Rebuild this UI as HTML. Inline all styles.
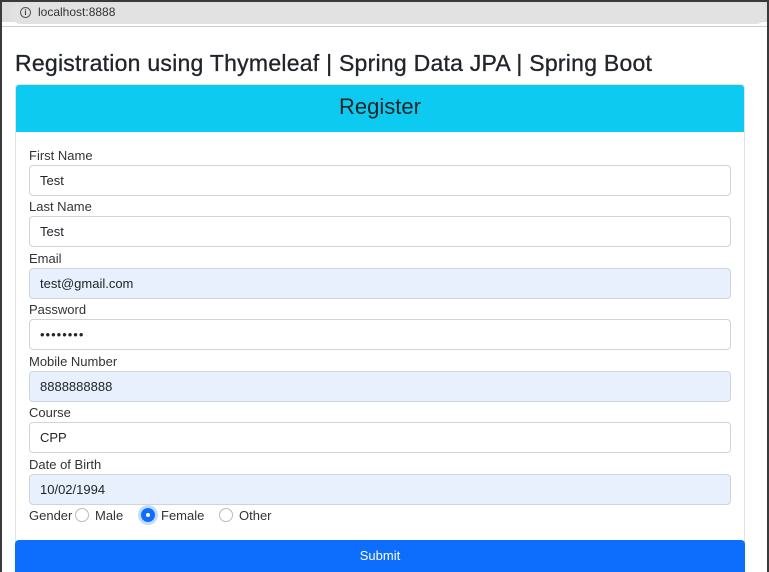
<!DOCTYPE html>
<html style="overflow:hidden;width:769px;height:572px"><head><style>
*{box-sizing:border-box;margin:0;padding:0}
body{width:769px;height:572px;overflow:hidden;background:#fff;font-family:"Liberation Sans",sans-serif;color:#212529;position:relative}
.frame{position:absolute;left:0;top:0;width:769px;height:572px;border:2px solid #3a3a3a;border-bottom:none;z-index:5;pointer-events:none}
.bar{position:absolute;left:2px;right:2px;top:2px;height:22px;background:#dedede;border-bottom:2px solid #fff}
.bar2{position:absolute;left:2px;right:2px;top:26px;height:1px;background:#cfcfcf}
.pill{position:absolute;left:8px;top:0;height:22px;right:0;background:#e2e2e2;border-radius:11px;font-size:12px;color:#333;padding-left:28px;line-height:21px}
.info{position:absolute;left:10px;top:5px;width:11px;height:11px;border:1.3px solid #555;border-radius:50%;font-size:8px;line-height:9px;text-align:center;padding:0;color:#444;font-weight:bold}
h1{position:absolute;left:15px;top:50px;font-size:23px;font-weight:normal;letter-spacing:0.25px;color:#212529;-webkit-text-stroke:0.3px #212529}
.card{position:absolute;left:15px;top:84px;width:730px;height:488px;border:1px solid #dfe2e6;border-radius:4px;overflow:hidden}
.head{height:47px;background:#0dcaf0;text-align:center;font-size:22px;line-height:44px}
.lbl{position:absolute;left:29px;font-size:13px;color:#333}
.inp{position:absolute;left:29px;width:702px;height:31px;border:1px solid #ced4da;border-radius:4px;font-size:13px;padding-left:10px;line-height:29px}
.fill{background:#e8f0fe}
.radio{position:absolute;top:508px;width:14px;height:14px;border:1px solid #bbb;border-radius:50%;background:#fff}
.sel{background:#0d6efd;border-color:#0d6efd;box-shadow:0 0 0 3px #c2dbfe}
.sel::after{content:"";position:absolute;left:4px;top:4px;width:4px;height:4px;border-radius:50%;background:#fff}
.btn{position:absolute;left:15px;top:540px;width:730px;height:32px;background:#0d6efd;color:#fff;text-align:center;font-size:13px;line-height:31px;border-radius:4px 4px 0 0}
</style></head><body>
<div class="frame"></div>
<div class="bar"><div class="pill"><span class="info">i</span>localhost:8888</div></div>
<div class="bar2"></div>
<h1>Registration using Thymeleaf | Spring Data JPA | Spring Boot</h1>
<div class="card"><div class="head">Register</div></div>
<div class="lbl" style="top:148px">First Name</div><div class="inp" style="top:165px">Test</div>
<div class="lbl" style="top:199px">Last Name</div><div class="inp" style="top:216px">Test</div>
<div class="lbl" style="top:251px">Email</div><div class="inp fill" style="top:268px">test@gmail.com</div>
<div class="lbl" style="top:302px">Password</div><div class="inp" style="top:319px;letter-spacing:1px">••••••••</div>
<div class="lbl" style="top:354px">Mobile Number</div><div class="inp fill" style="top:371px">8888888888</div>
<div class="lbl" style="top:405px">Course</div><div class="inp" style="top:422px">CPP</div>
<div class="lbl" style="top:457px">Date of Birth</div><div class="inp fill" style="top:474px">10/02/1994</div>
<div class="lbl" style="top:508px">Gender</div>
<div class="radio" style="left:75px"></div><div class="lbl" style="left:95px;top:508px">Male</div>
<div class="radio sel" style="left:141px"></div><div class="lbl" style="left:161px;top:508px">Female</div>
<div class="radio" style="left:219px"></div><div class="lbl" style="left:239px;top:508px">Other</div>
<div class="btn">Submit</div>
</body></html>
